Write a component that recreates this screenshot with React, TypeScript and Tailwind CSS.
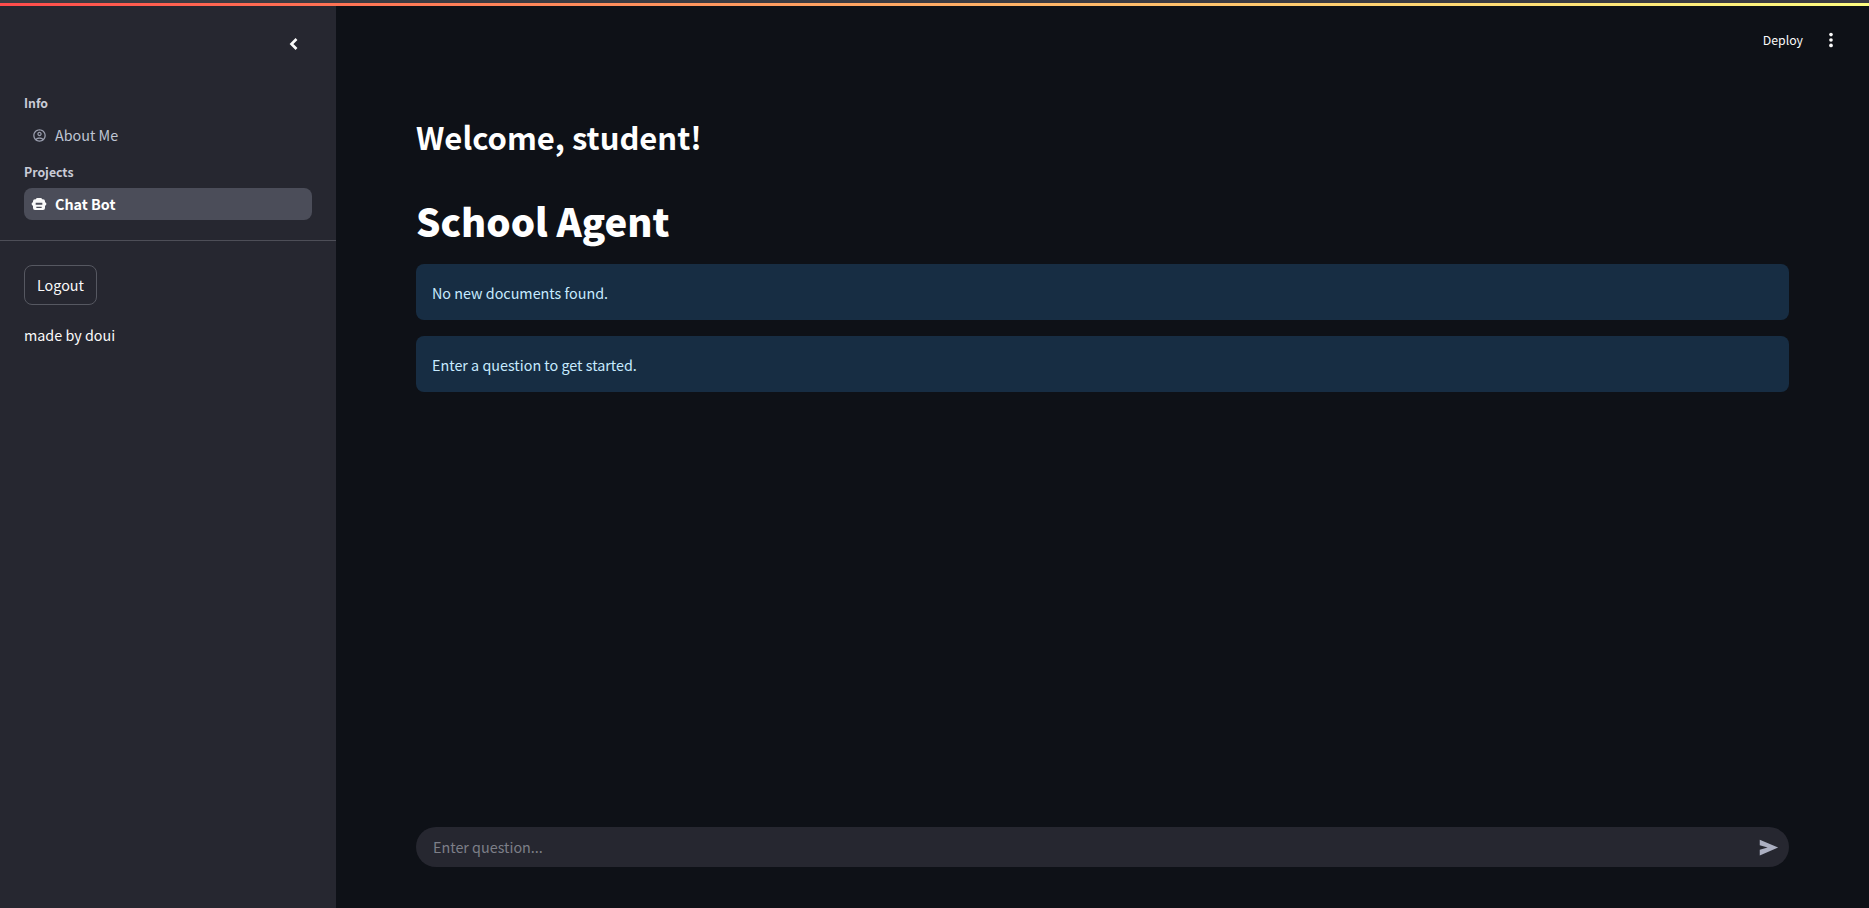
import React from "react";

const sans = "font-['Noto_Sans_CJK_JP','Source_Sans_Pro',sans-serif]";

function App() {
  return (
    <div className={`flex h-[908px] w-[1869px] flex-col overflow-hidden bg-[#0e1117] text-white ${sans}`}>
      <div className="h-[3px] shrink-0 bg-[#3b3b42]" />
      <div className="h-[3px] shrink-0 bg-gradient-to-r from-[#ff4b4b] to-[#fffd80]" />
      <div className="flex min-h-0 flex-1">
        <aside className="flex w-[336px] shrink-0 flex-col bg-[#262730]">
          <div className="flex h-[76px] shrink-0 items-center justify-end pr-[32px]">
            <svg width="20" height="20" viewBox="0 0 24 24" fill="none" stroke="#fafafa" strokeWidth="3.200">
              <path d="M15 6l-6 6 6 6" />
            </svg>
          </div>
          <nav className="flex flex-col px-6">
            <div className="mt-[5px] flex h-[32px] items-center text-[12.3px] font-semibold text-[#c9cbd6]">Info</div>
            <div className="flex h-[32px] items-center gap-[8px] pl-[8px] text-[#bfc5d3]">
              <svg width="15" height="15" viewBox="0 0 24 24" fill="#9a9eae">
                <path d="M12 2C6.48 2 2 6.48 2 12s4.48 10 10 10 10-4.48 10-10S17.52 2 12 2zM7.350 18.500C8.660 17.560 10.260 17 12 17s3.340.56 4.650 1.500C15.340 19.440 13.740 20 12 20s-3.340-.56-4.650-1.500zm10.790-1.380C16.450 15.820 14.320 15 12 15s-4.450.82-6.140 2.120C4.700 15.730 4 13.950 4 12c0-4.420 3.580-8 8-8s8 3.580 8 8c0 1.950-.7 3.730-1.860 5.120zM12 6c-1.930 0-3.500 1.570-3.500 3.500S10.070 13 12 13s3.500-1.570 3.500-3.500S13.930 6 12 6zm0 5c-.83 0-1.500-.67-1.500-1.500S11.170 8 12 8s1.500.67 1.500 1.500S12.830 11 12 11z" />
              </svg>
              <span className="text-[14.35px] leading-none pt-px">About Me</span>
            </div>
            <div className="mt-[11px] flex h-[20px] items-center text-[12.3px] font-semibold text-[#c9cbd6]">Projects</div>
            <div className="mt-[6px] flex h-[32px] items-center gap-[8px] rounded-lg bg-[#4b4d59] pl-[7px]">
              <svg width="16" height="16" viewBox="0 0 24 24" fill="#fafafa" fillRule="evenodd">
                <path d="M9.500 3h5a2 2 0 0 1 2 2h1.500a3 3 0 0 1 3 3v1.500c1.300.2 2 1.200 2 2.500s-.7 2.300-2 2.500V18a3 3 0 0 1-3 3H6a3 3 0 0 1-3-3v-3.500c-1.300-.2-2-1.200-2-2.500s.7-2.300 2-2.500V8a3 3 0 0 1 3-3h1.500a2 2 0 0 1 2-2zM7 10v3h10v-3zM8 16v2h8v-2z" />
              </svg>
              <span className="text-[14.35px] font-semibold leading-none pt-px">Chat Bot</span>
            </div>
          </nav>
          <div className="mt-[20px] h-px bg-[#4d4e57]" />
          <div className="px-6 pt-6">
            <button className="flex h-[40px] w-[73px] items-center justify-center rounded-lg border border-[#565861] text-[14.35px] text-[#fafafa]">
              Logout
            </button>
            <p className="mt-[16px] text-[14.35px] leading-[28px] text-[#fafafa]">made by doui</p>
          </div>
        </aside>
        <main className="flex min-w-0 flex-1 flex-col">
          <header className="flex h-[67px] shrink-0 items-center justify-end pr-[28px]">
            <span className="text-[12.3px] leading-none text-[#fafafa] pt-px">Deploy</span>
            <svg width="20" height="20" viewBox="0 0 24 24" fill="#fafafa" className="ml-[18px]">
              <circle cx="12" cy="5.500" r="2.200" />
              <circle cx="12" cy="12" r="2.200" />
              <circle cx="12" cy="18.500" r="2.200" />
            </svg>
          </header>
          <div className="flex flex-1 flex-col pl-[80px] pr-[80px]">
            <h2 className="mt-[40px] text-[31px] font-semibold leading-[48px]">Welcome, student!</h2>
            <h1 className="mt-[30px] text-[38.3px] font-extrabold leading-[60px]">School Agent</h1>
            <div className="mt-[13px] flex h-[56px] items-center rounded-lg bg-[#172d43] px-4 text-[14.35px] text-[#c7ebff]">
              <span className="pt-px">No new documents found.</span>
            </div>
            <div className="mt-[16px] flex h-[56px] items-center rounded-lg bg-[#172d43] px-4 text-[14.35px] text-[#c7ebff]">
              <span className="pt-px">Enter a question to get started.</span>
            </div>
            <div className="mt-auto mb-[41px] flex h-[40px] items-center justify-between rounded-[20px] bg-[#262730] pl-[17px] pr-[10px]">
              <span className="text-[14.35px] text-[#7d7f88]">Enter question...</span>
              <svg width="21" height="21" viewBox="0 0 24 24" fill="#acb0c2">
                <path d="M2 21l21-9L2 3v6.500l9 2.500-9 2.500z" />
              </svg>
            </div>
          </div>
        </main>
      </div>
    </div>
  );
}

export default App;
